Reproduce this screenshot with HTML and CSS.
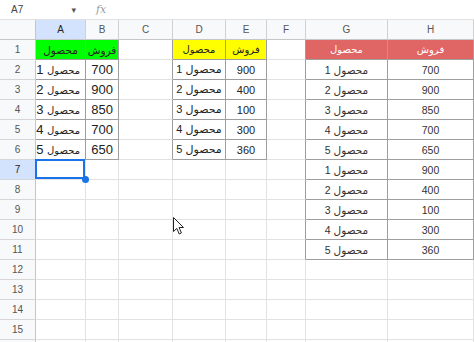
FILE: index.html
```html
<!DOCTYPE html>
<html>
<head>
<meta charset="utf-8">
<link rel="stylesheet" href="styles.css">
</head>
<body>
<div class="app">
  <div class="topbar">
    <div class="namebox"><span class="ref">A7</span><span class="caret">▾</span></div>
    <div class="fx">fx</div>
  </div>
  <div class="sheet">
    <div class="c corner"></div>
    <div class="c hd on">A</div>
    <div class="c hd">B</div>
    <div class="c hd">C</div>
    <div class="c hd">D</div>
    <div class="c hd">E</div>
    <div class="c hd">F</div>
    <div class="c hd">G</div>
    <div class="c hd">H</div>

    <div class="c rh">1</div>
    <div class="c b th1 mid green">محصول</div>
    <div class="c b th1 mid green">فروش</div>
    <div class="c el"></div>
    <div class="c b th2 mid yellow">محصول</div>
    <div class="c b th2 mid yellow">فروش</div>
    <div class="c el"></div>
    <div class="c b th3 mid red">محصول</div>
    <div class="c b th3 mid red">فروش</div>

    <div class="c rh">2</div>
    <div class="c b t1 end"><span><span class="ar">محصول</span> 1</span></div>
    <div class="c b t1 end">700</div>
    <div class="c el"></div>
    <div class="c b t2 mid">محصول 1</div>
    <div class="c b t2 mid">900</div>
    <div class="c el"></div>
    <div class="c b t3 mid">محصول 1</div>
    <div class="c b t3 mid">700</div>

    <div class="c rh">3</div>
    <div class="c b t1 end"><span><span class="ar">محصول</span> 2</span></div>
    <div class="c b t1 end">900</div>
    <div class="c el"></div>
    <div class="c b t2 mid">محصول 2</div>
    <div class="c b t2 mid">400</div>
    <div class="c el"></div>
    <div class="c b t3 mid">محصول 2</div>
    <div class="c b t3 mid">900</div>

    <div class="c rh">4</div>
    <div class="c b t1 end"><span><span class="ar">محصول</span> 3</span></div>
    <div class="c b t1 end">850</div>
    <div class="c el"></div>
    <div class="c b t2 mid">محصول 3</div>
    <div class="c b t2 mid">100</div>
    <div class="c el"></div>
    <div class="c b t3 mid">محصول 3</div>
    <div class="c b t3 mid">850</div>

    <div class="c rh">5</div>
    <div class="c b t1 end"><span><span class="ar">محصول</span> 4</span></div>
    <div class="c b t1 end">700</div>
    <div class="c el"></div>
    <div class="c b t2 mid">محصول 4</div>
    <div class="c b t2 mid">300</div>
    <div class="c el"></div>
    <div class="c b t3 mid">محصول 4</div>
    <div class="c b t3 mid">700</div>

    <div class="c rh">6</div>
    <div class="c b t1 end"><span><span class="ar">محصول</span> 5</span></div>
    <div class="c b t1 end">650</div>
    <div class="c el"></div>
    <div class="c b t2 mid">محصول 5</div>
    <div class="c b t2 mid">360</div>
    <div class="c el"></div>
    <div class="c b t3 mid">محصول 5</div>
    <div class="c b t3 mid">650</div>

    <div class="c rh on">7</div>
    <div class="c active"><span class="handle"></span></div>
    <div class="c"></div>
    <div class="c"></div>
    <div class="c"></div>
    <div class="c"></div>
    <div class="c el"></div>
    <div class="c b t3 mid">محصول 1</div>
    <div class="c b t3 mid">900</div>

    <div class="c rh">8</div>
    <div class="c"></div>
    <div class="c"></div>
    <div class="c"></div>
    <div class="c"></div>
    <div class="c"></div>
    <div class="c el"></div>
    <div class="c b t3 mid">محصول 2</div>
    <div class="c b t3 mid">400</div>

    <div class="c rh">9</div>
    <div class="c"></div>
    <div class="c"></div>
    <div class="c"></div>
    <div class="c"></div>
    <div class="c"></div>
    <div class="c el"></div>
    <div class="c b t3 mid">محصول 3</div>
    <div class="c b t3 mid">100</div>

    <div class="c rh">10</div>
    <div class="c"></div>
    <div class="c"></div>
    <div class="c"></div>
    <div class="c"></div>
    <div class="c"></div>
    <div class="c el"></div>
    <div class="c b t3 mid">محصول 4</div>
    <div class="c b t3 mid">300</div>

    <div class="c rh">11</div>
    <div class="c"></div>
    <div class="c"></div>
    <div class="c"></div>
    <div class="c"></div>
    <div class="c"></div>
    <div class="c el"></div>
    <div class="c b t3 mid">محصول 5</div>
    <div class="c b t3 mid">360</div>

    <div class="c rh">12</div>
    <div class="c"></div><div class="c"></div><div class="c"></div><div class="c"></div>
    <div class="c"></div><div class="c"></div><div class="c"></div><div class="c"></div>

    <div class="c rh">13</div>
    <div class="c"></div><div class="c"></div><div class="c"></div><div class="c"></div>
    <div class="c"></div><div class="c"></div><div class="c"></div><div class="c"></div>

    <div class="c rh">14</div>
    <div class="c"></div><div class="c"></div><div class="c"></div><div class="c"></div>
    <div class="c"></div><div class="c"></div><div class="c"></div><div class="c"></div>

    <div class="c rh">15</div>
    <div class="c"></div><div class="c"></div><div class="c"></div><div class="c"></div>
    <div class="c"></div><div class="c"></div><div class="c"></div><div class="c"></div>

    <div class="c rh"></div>
    <div class="c"></div><div class="c"></div><div class="c"></div><div class="c"></div>
    <div class="c"></div><div class="c"></div><div class="c"></div><div class="c"></div>
  </div>
  <svg class="cursor" width="13" height="20" viewBox="0 0 13 20">
    <path d="M1.5 1.5 L1.5 15.5 L4.8 12.4 L7.2 18 L9.4 17 L7.1 11.5 L11.5 11.5 Z" fill="#fff" stroke="#222" stroke-width="1" stroke-linejoin="round"/>
  </svg>
</div>
</body>
</html>
```

FILE: styles.css
```css
* { box-sizing: border-box; }
html, body { margin: 0; padding: 0; background: #fff; }
body {
  width: 474px;
  height: 342px;
  overflow: hidden;
  font-family: "Liberation Sans", "DejaVu Sans", Arial, sans-serif;
  color: #222;
}
.app { position: relative; width: 474px; height: 342px; overflow: hidden; }

.topbar {
  height: 20px;
  display: flex;
  align-items: center;
  background: #fff;
  border-bottom: 1px solid #e0e0e0;
}
.namebox {
  width: 88px;
  display: flex;
  align-items: center;
  justify-content: space-between;
  padding: 0 12px 0 11px;
  font-size: 10px;
  color: #444;
}
.caret { font-size: 9px; color: #555; }
.fx {
  margin-left: 8px;
  font-family: "DejaVu Serif", "Liberation Serif", serif;
  font-style: italic;
  font-size: 11px;
  color: #9a9a9a;
}

.sheet {
  display: grid;
  grid-template-columns: 36px 50px 33px 54px 53px 41px 39px 82px 86px;
  grid-auto-rows: 20px;
}
.c {
  border-right: 1px solid #e2e2e2;
  border-bottom: 1px solid #e2e2e2;
  display: flex;
  align-items: center;
  padding: 0 4px;
  white-space: nowrap;
  overflow: hidden;
  font-size: 13px;
}
.corner {
  background: #f8f9fa;
  border-right: 1px solid #c4c7c5;
  border-bottom: 1px solid #c4c7c5;
}
.hd {
  background: #f8f9fa;
  justify-content: center;
  font-size: 10px;
  color: #555;
  border-right-color: #d0d0d0;
  border-bottom-color: #c4c7c5;
}
.rh {
  background: #f8f9fa;
  justify-content: center;
  font-size: 10px;
  color: #555;
  border-right-color: #c4c7c5;
  border-bottom-color: #d6d6d6;
}
.on { background: #d3e3fd; color: #1f1f1f; }

.b { border-right-color: #9e9e9e; border-bottom-color: #9e9e9e; }
.el { border-right-color: #9e9e9e; }

.th1 { font-size: 10.5px; padding: 0 2px; }
.th2 { font-size: 10px; }
.th3 { font-size: 10px; }

.t1 { font-size: 13px; padding: 0 5px 0 1px; }
.t1 .ar { font-size: 10px; }
.t2 { font-size: 11px; }
.t3 { font-size: 10.5px; color: #333; }

.mid { justify-content: center; }
.end { justify-content: flex-end; }

.green { background: #00ff00; }
.yellow { background: #ffff00; }
.red { background: #e06666; color: #fff; }

.active { position: relative; overflow: visible; }
.active::before {
  content: "";
  position: absolute;
  left: -1px;
  top: -1px;
  right: 0;
  bottom: 0;
  border: 2px solid #1a73e8;
}
.handle {
  position: absolute;
  right: -4px;
  bottom: -4px;
  width: 7px;
  height: 7px;
  border-radius: 50%;
  background: #1a73e8;
  z-index: 3;
}

.cursor { position: absolute; left: 172px; top: 216px; }
```
